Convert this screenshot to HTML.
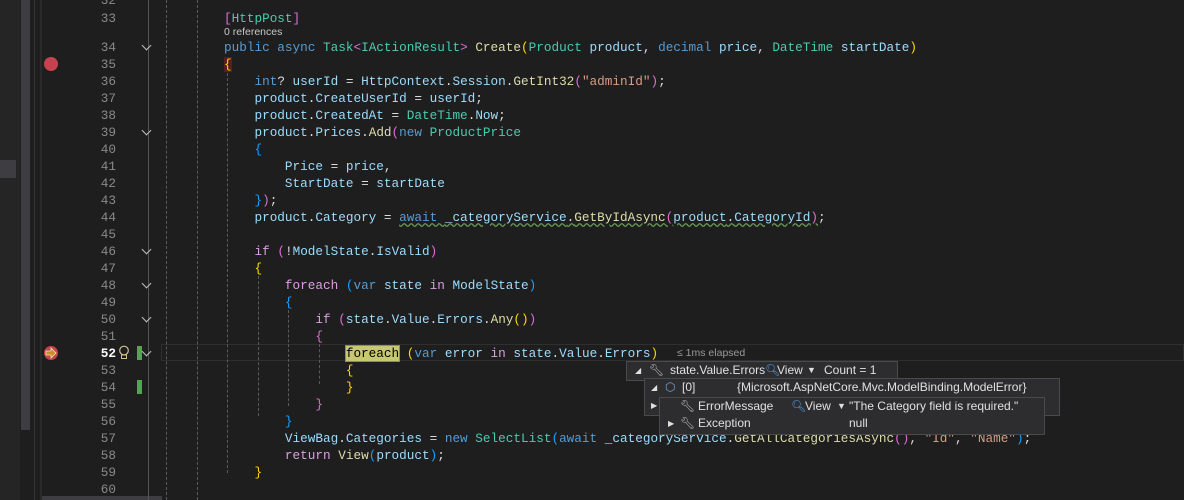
<!DOCTYPE html>
<html><head><meta charset="utf-8"><style>
body{margin:0;width:1184px;height:500px;background:#1e1e1e;overflow:hidden;position:relative;font-family:"Liberation Mono",monospace;}
.l{position:absolute;left:224px;height:17px;line-height:17px;font-size:12.7px;white-space:pre;color:#dcdcdc}
.n{position:absolute;left:60px;width:56px;text-align:right;height:17px;line-height:17px;font-size:12.7px;color:#8a8a8a;font-family:"Liberation Mono",monospace}
.k{color:#569cd6}.c{color:#d8a0df}.t{color:#4ec9b0}.m{color:#dcdcaa}.v{color:#9cdcfe}.s{color:#d69d85}
.g{color:#ffd700}.o{color:#da70d6}.b{color:#179fff}
.guide{position:absolute;width:0;border-left:1px dashed #5a5a5a}
.fold{position:absolute;left:143px;width:6px;height:6px;border-right:1px solid #c0c0c0;border-bottom:1px solid #c0c0c0;transform:rotate(45deg)}
.tip{position:absolute;background:#2d2d30;border:1px solid #4a4a4a;font-family:"Liberation Sans",sans-serif;font-size:12px;color:#e0e0e0;line-height:17px;white-space:pre}
</style></head><body>
<div style="position:absolute;left:0;top:0;width:20px;height:500px;background:#252526"></div>
<div style="position:absolute;left:21px;top:0;width:9px;height:430px;background:#3e3e42"></div>
<div style="position:absolute;left:34px;top:0;width:1px;height:500px;background:#333"></div>
<div style="position:absolute;left:40px;top:0;width:2px;height:500px;background:#2a2a2a"></div>
<div style="position:absolute;left:42px;top:496px;width:120px;height:4px;background:#3e3e42"></div>
<div style="position:absolute;left:0;top:160px;width:16px;height:18px;background:#3e3e42"></div>
<div style="position:absolute;left:148px;top:0;width:1px;height:500px;background:#555"></div>
<!-- current line -->
<div style="position:absolute;left:161px;top:344px;width:1023px;height:17px;border:1px solid #2f2f2f;box-sizing:border-box"></div>
<!-- guides -->
<div class="guide" style="left:166px;top:0;height:500px"></div>
<div class="guide" style="left:197px;top:0;height:500px"></div>
<div class="guide" style="left:227px;top:73px;height:400px"></div>
<div class="guide" style="left:258px;top:276px;height:140px"></div>
<div class="guide" style="left:288px;top:310px;height:96px"></div>
<div class="guide" style="left:319px;top:344px;height:40px"></div>
<!-- breakpoints -->
<div style="position:absolute;left:44px;top:57px;width:14px;height:14px;border-radius:50%;background:#c5434e"></div>
<div style="position:absolute;left:44px;top:346px;width:14px;height:14px;border-radius:50%;background:#c5434e"></div>
<div style="position:absolute;left:45px;top:349px;width:0;height:0;"></div>
<svg style="position:absolute;left:44px;top:346px" width="14" height="14"><path d="M2 5h5V2l5 5-5 5V9H2z" fill="#c69026" stroke="#f2e2b0" stroke-width="0.8"/></svg>
<svg style="position:absolute;left:118px;top:345px" width="12" height="15"><circle cx="6" cy="5.5" r="4.3" fill="none" stroke="#d0c090" stroke-width="1.2"/><rect x="3.5" y="10" width="5" height="3.5" fill="none" stroke="#d0c090"/></svg>
<div style="position:absolute;left:137px;top:346px;width:5px;height:14px;background:#4fa84f"></div>
<div style="position:absolute;left:137px;top:380px;width:5px;height:14px;background:#4fa84f"></div>
<!-- folds -->
<div class="fold" style="top:42px"></div>
<div class="fold" style="top:127px"></div>
<div class="fold" style="top:246px"></div>
<div class="fold" style="top:280px"></div>
<div class="fold" style="top:314px"></div>
<div class="fold" style="top:348px"></div>
<!-- line numbers -->
<div class="n" style="top:-8px">32</div>
<div class="n" style="top:10px">33</div>
<div class="n" style="top:39px">34</div>
<div class="n" style="top:56px">35</div><div class="n" style="top:73px">36</div><div class="n" style="top:90px">37</div><div class="n" style="top:107px">38</div><div class="n" style="top:124px">39</div><div class="n" style="top:141px">40</div><div class="n" style="top:158px">41</div><div class="n" style="top:175px">42</div><div class="n" style="top:192px">43</div><div class="n" style="top:209px">44</div><div class="n" style="top:226px">45</div><div class="n" style="top:243px">46</div><div class="n" style="top:260px">47</div><div class="n" style="top:277px">48</div><div class="n" style="top:294px">49</div><div class="n" style="top:311px">50</div><div class="n" style="top:328px">51</div>
<div class="n" style="top:345px;color:#fff;font-weight:bold">52</div>
<div class="n" style="top:362px">53</div><div class="n" style="top:379px">54</div><div class="n" style="top:396px">55</div><div class="n" style="top:413px">56</div><div class="n" style="top:430px">57</div><div class="n" style="top:447px">58</div><div class="n" style="top:464px">59</div><div class="n" style="top:481px">60</div>
<!-- code -->
<div class="l" style="top:10px"><span class="o">[</span><span class="t">HttpPost</span><span class="o">]</span></div>
<div style="position:absolute;left:224px;top:26px;font-family:'Liberation Sans',sans-serif;font-size:10.5px;color:#c8c8c8">0 references</div>
<div class="l" style="top:39px"><span class="k">public async </span><span class="t">Task</span><span class="o">&lt;</span><span class="t">IActionResult</span><span class="o">&gt;</span> <span class="m">Create</span><span class="g">(</span><span class="t">Product</span> <span class="v">product</span>, <span class="k">decimal</span> <span class="v">price</span>, <span class="t">DateTime</span> <span class="v">startDate</span><span class="g">)</span></div>
<div class="l" style="top:56px"><span class="g" style="background:#5a1d1d">{</span></div>
<div class="l" style="top:73px">    <span class="k">int</span>? <span class="v">userId</span> = <span class="v">HttpContext</span>.<span class="v">Session</span>.<span class="m">GetInt32</span><span class="o">(</span><span class="s">"adminId"</span><span class="o">)</span>;</div>
<div class="l" style="top:90px">    <span class="v">product</span>.<span class="v">CreateUserId</span> = <span class="v">userId</span>;</div>
<div class="l" style="top:107px">    <span class="v">product</span>.<span class="v">CreatedAt</span> = <span class="t">DateTime</span>.<span class="v">Now</span>;</div>
<div class="l" style="top:124px">    <span class="v">product</span>.<span class="v">Prices</span>.<span class="m">Add</span><span class="o">(</span><span class="k">new</span> <span class="t">ProductPrice</span></div>
<div class="l" style="top:141px">    <span class="b">{</span></div>
<div class="l" style="top:158px">        <span class="v">Price</span> = <span class="v">price</span>,</div>
<div class="l" style="top:175px">        <span class="v">StartDate</span> = <span class="v">startDate</span></div>
<div class="l" style="top:192px">    <span class="b">}</span><span class="o">)</span>;</div>
<div class="l" style="top:209px">    <span class="v">product</span>.<span class="v">Category</span> = <span class="k" style="text-decoration:underline wavy #6a9955">await </span><span class="v" style="text-decoration:underline wavy #6a9955">_categoryService</span><span style="text-decoration:underline wavy #6a9955">.<span class="m">GetByIdAsync</span><span class="o">(</span><span class="v">product</span>.<span class="v">CategoryId</span><span class="o">)</span></span>;</div>
<div class="l" style="top:243px">    <span class="c">if</span> <span class="o">(</span>!<span class="v">ModelState</span>.<span class="v">IsValid</span><span class="o">)</span></div>
<div class="l" style="top:260px">    <span class="g">{</span></div>
<div class="l" style="top:277px">        <span class="c">foreach</span> <span class="b">(</span><span class="k">var</span> <span class="v">state</span> <span class="c">in</span> <span class="v">ModelState</span><span class="b">)</span></div>
<div class="l" style="top:294px">        <span class="b">{</span></div>
<div class="l" style="top:311px">            <span class="c">if</span> <span class="o">(</span><span class="v">state</span>.<span class="v">Value</span>.<span class="v">Errors</span>.<span class="m">Any</span><span class="g">()</span><span class="o">)</span></div>
<div class="l" style="top:328px">            <span class="o">{</span></div>
<div class="l" style="top:345px">                <span style="background:#c8c870;color:#000;outline:1px solid #888">foreach</span> <span class="g">(</span><span class="k">var</span> <span class="v">error</span> <span class="c">in</span> <span class="v">state</span>.<span class="v">Value</span>.<span class="v">Errors</span><span class="g">)</span></div>
<div style="position:absolute;left:677px;top:347px;font-family:'Liberation Sans',sans-serif;font-size:10.5px;color:#9a9a9a">≤ 1ms elapsed</div>
<div class="l" style="top:362px">                <span class="g">{</span></div>
<div class="l" style="top:379px">                <span class="g">}</span></div>
<div class="l" style="top:396px">            <span class="o">}</span></div>
<div class="l" style="top:413px">        <span class="b">}</span></div>
<div class="l" style="top:430px">        <span class="v">ViewBag</span>.<span class="v">Categories</span> = <span class="k">new</span> <span class="t">SelectList</span><span class="b">(</span><span class="k">await</span> <span class="v">_categoryService</span>.<span class="m">GetAllCategoriesAsync</span><span class="o">()</span>, <span class="s">"Id"</span>, <span class="s">"Name"</span><span class="b">)</span>;</div>
<div class="l" style="top:447px">        <span class="c">return</span> <span class="m">View</span><span class="b">(</span><span class="v">product</span><span class="b">)</span>;</div>
<div class="l" style="top:464px">    <span class="g">}</span></div>
<!-- tooltips -->
<div class="tip" style="left:626px;top:361px;width:270px;height:18px"><span style="position:absolute;left:8px;font-size:8px">◢</span><span style="position:absolute;left:22px;color:#bbb">🔧︎</span><span style="position:absolute;left:43px">state.Value.Errors</span><span style="position:absolute;left:138px;color:#4aa0e6">🔍︎</span><span style="position:absolute;left:150px">View</span><span style="position:absolute;left:180px;font-size:9px">▼</span><span style="position:absolute;left:197px">Count = 1</span></div>
<div class="tip" style="left:644px;top:378px;width:414px;height:36px"><span style="position:absolute;left:6px;font-size:8px">◢</span><span style="position:absolute;left:20px;color:#6aa6e0">⬡</span><span style="position:absolute;left:37px">[0]</span><span style="position:absolute;left:92px">{Microsoft.AspNetCore.Mvc.ModelBinding.ModelError}</span><span style="position:absolute;left:6px;top:18px;font-size:8px">▶</span></div>
<div class="tip" style="left:659px;top:397px;width:384px;height:36px;background:#2d2d30"><span style="position:absolute;left:20px;color:#bbb">🔧︎</span><span style="position:absolute;left:38px">ErrorMessage</span><span style="position:absolute;left:131px;color:#4aa0e6">🔍︎</span><span style="position:absolute;left:145px">View</span><span style="position:absolute;left:177px;font-size:9px">▼</span><span style="position:absolute;left:189px">"The Category field is required."</span><span style="position:absolute;left:8px;top:17px;font-size:8px">▶</span><span style="position:absolute;left:20px;top:17px;color:#bbb">🔧︎</span><span style="position:absolute;left:38px;top:17px">Exception</span><span style="position:absolute;left:189px;top:17px">null</span></div>
</body></html>
